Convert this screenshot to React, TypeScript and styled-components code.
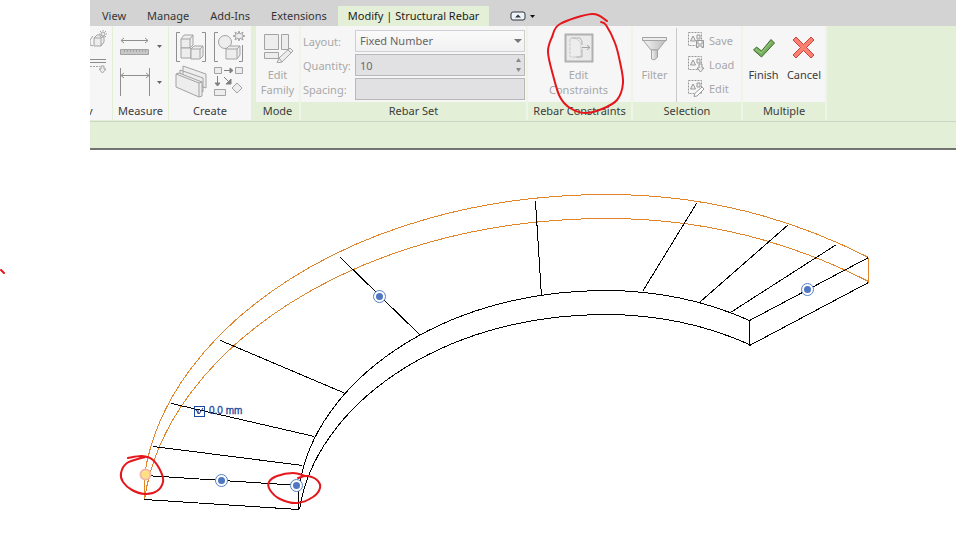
import React from "react";
import styled, { createGlobalStyle } from "styled-components";

const GlobalStyle = createGlobalStyle`
  body { margin: 0; background: #fff; overflow: hidden; }
  * { box-sizing: border-box; }
  button, select, input { font: inherit; margin: 0; }
`;

const Page = styled.main`
  position: relative;
  min-height: 100vh;
  font: 11px/15px "Noto Sans", "Open Sans", sans-serif;
  color: #3c3c3c;
`;
const Ribbon = styled.header`
  margin-left: 90px;
  background: #e4efd7;
  border-bottom: 2px solid #72756f;
`;
const TabBar = styled.nav`
  display: flex;
  gap: 1px;
  height: 26px;
  padding: 6px 0 0 2px;
  background: #d3d3d3;
`;
const Tab = styled.button<{ $active?: boolean }>`
  height: 20px;
  padding: 0 10px;
  border: 0;
  white-space: nowrap;
  line-height: 20px;
  color: ${(p) => (p.$active ? "#1c1c1c" : "#333")};
  background: ${(p) => (p.$active ? "#e4efd7" : "transparent")};
`;
const RibbonToggle = styled.button`
  display: flex;
  align-items: center;
  gap: 4px;
  margin-left: 20px;
  padding: 0;
  border: 0;
  background: transparent;
`;
const Panels = styled.div`
  display: flex;
  height: 96px;
  border-bottom: 1px solid #cdd4c6;
`;
const PanelBox = styled.section<{ $width: number; $plain?: boolean }>`
  display: flex;
  flex: none;
  flex-direction: column;
  width: ${(p) => p.$width}px;
  height: 94px;
  overflow: hidden;
  background: ${(p) => (p.$plain ? "#f6f6f6" : "#e4efd7")};
  border-right: ${(p) => (p.$plain ? "1px solid #e4efd7" : "2px solid #eef5e6")};
`;
const PanelBody = styled.div`
  display: flex;
  height: 76px;
  background: #f6f6f6;
`;
const PanelTitle = styled.h2<{ $clipped?: boolean }>`
  margin: 0;
  font: inherit;
  line-height: 18px;
  text-align: ${(p) => (p.$clipped ? "left" : "center")};
  text-indent: ${(p) => (p.$clipped ? "-3px" : "0")};
  white-space: nowrap;
`;
const Divider = styled.div`
  flex: none;
  width: 4px;
`;
const IconButton = styled.button`
  display: flex;
  flex: none;
  padding: 0;
  border: 0;
  background: transparent;
`;
const ToolGrid = styled.div`
  display: grid;
  grid-template-columns: auto auto;
  gap: 2px 6px;
  margin: 5px auto 0 6px;
  align-content: start;
`;
const MeasureGrid = styled(ToolGrid)`
  grid-template-columns: 32px 8px;
  gap: 4px 6px;
  align-items: center;
`;
const LargeButton = styled.button<{ $width: number; $enabled?: boolean }>`
  display: flex;
  flex: none;
  flex-direction: column;
  align-items: center;
  width: ${(p) => p.$width}px;
  padding: 5px 0 0;
  border: 0;
  background: transparent;
  line-height: 15px;
  white-space: nowrap;
  color: ${(p) => (p.$enabled ? "#3c3c3c" : "#a8a8a8")};

  svg { margin-bottom: 4px; }
`;
const SetForm = styled.form`
  display: grid;
  flex: 1;
  grid-template-columns: 50px 170px;
  grid-auto-rows: 22px;
  row-gap: 2px;
  column-gap: 2px;
  padding: 4px 0 0 2px;
  color: #a8a8a8;
`;
const FieldLabel = styled.label`
  line-height: 24px;
  white-space: nowrap;
`;
const FieldWrap = styled.div`
  position: relative;
  display: flex;
`;
const Arrow = styled.svg`
  position: absolute;
  right: 1px;
  top: 4px;
  pointer-events: none;
`;
const LayoutSelect = styled.select`
  appearance: none;
  width: 100%;
  padding: 0 4px 2px;
  border: 1px solid #cfcfd3;
  border-radius: 0;
  background: linear-gradient(#fafafa, #f1f1f2);
  color: #666;
  opacity: 1;
`;
const Field = styled.input`
  width: 100%;
  padding: 0 4px;
  border: 1px solid #b8b8bb;
  background: #e1e1e3;
  color: #6c6c6c;
`;
const SelectionList = styled.div`
  display: flex;
  flex: 1;
  flex-direction: column;
  margin-top: 2px;
  padding-left: 10px;
  border-left: 1px solid #c8c8c8;
`;
const SmallButton = styled.button`
  display: flex;
  align-items: center;
  gap: 4px;
  height: 24px;
  padding: 0;
  border: 0;
  background: transparent;
  color: #a8a8a8;
`;
const OptionsBar = styled.div`
  height: 26px;
`;
const Canvas = styled.section`
  position: relative;
  height: 408px;
  overflow: hidden;
`;
const Drawing = styled.svg`
  display: block;
`;
const Markup = styled.svg`
  position: absolute;
  left: 0;
  top: 0;
  pointer-events: none;
`;
const OffsetLabel = styled.label`
  position: absolute;
  left: 194px;
  top: 255px;
  display: flex;
  align-items: center;
  gap: 4px;
  font: 10px/12px "Liberation Sans", Arial, sans-serif;
  color: #1d48a0;
  -webkit-text-stroke: 0.3px #1d48a0;
`;
const OffsetCheck = styled.input`
  appearance: none;
  width: 11px;
  height: 11px;
  border: 1px solid #1d48a0;
`;
const CheckMark = styled.svg`
  position: absolute;
  left: 0;
  top: 0;
  pointer-events: none;
`;

type Pt = [number, number];

/* Smooth curve through all of the given points. */
function curve(pts: Pt[]): string {
  let d = `M${pts[0][0]} ${pts[0][1]}`;
  for (let i = 0; i < pts.length - 1; i++) {
    const a = pts[Math.max(i - 1, 0)];
    const b = pts[i];
    const c = pts[i + 1];
    const e = pts[Math.min(i + 2, pts.length - 1)];
    d += `C${b[0] + (c[0] - a[0]) / 6} ${b[1] + (c[1] - a[1]) / 6} ${c[0] - (e[0] - b[0]) / 6} ${c[1] - (e[1] - b[1]) / 6} ${c[0]} ${c[1]}`;
  }
  return d;
}

const OUTER = "M144 475C165 329 352 194 607 194C699 194 784 214 868 257";
const INNER = "M299 485C314 384 437 290 605 290C655 290 702 299 749 320";
const BARS: [number, number, number, number][] = [[535, 201, 541, 296], [696, 203, 642, 291], [788, 224, 700, 301], [836, 244, 730, 312], [868, 257, 749, 320], [340, 257, 420, 335], [220, 340, 345, 393], [171, 403, 314, 436], [153, 446, 302, 465], [145, 475, 299, 485], [144, 499, 298, 509], [749, 345, 868, 282]];
const HANDLES: Pt[] = [[379, 296], [807, 289], [221, 480], [296, 485]];
const CIRCLES: Pt[][] = [
  [[607, 21], [592, 14], [560, 24], [552, 37], [548, 52], [553, 75], [560, 97], [570, 108], [585, 113], [602, 109], [617, 100], [623, 83], [620, 62], [615, 43], [606, 25], [601, 22]],
  [[128, 458], [142, 456], [153, 460], [161, 472], [163, 482], [157, 491], [145, 494], [132, 490], [123, 482], [121, 473], [127, 463], [145, 457]],
  [[298, 478], [307, 476], [317, 480], [320, 488], [313, 497], [297, 503], [280, 499], [270, 490], [269, 482], [277, 476], [293, 473], [305, 476]],
];

const G = "#a3a3a3";
const svgProps = { fill: "#ededee", stroke: G, strokeWidth: 1, "aria-hidden": true };

const DropArrow = () => (
  <svg width="5" height="3" aria-hidden><path d="M0 0h5L2.500 3z" fill="#666" /></svg>
);
const ViewFragmentIcon = () => (
  <svg width="20" height="50" viewBox="0 -4 20 50" {...svgProps}>
    <path d="M4 8h7v8H4zM4 8l3-3h7l-3 3M11 8l3-3v7l-3 4M0 10v5l3 1M0 10l3-4" />
    <circle cx="13" cy="4" r="2" />
    <path d="M13 0v1M13 7v1M9 4h1M16 4h1M10 1l1 1M15 6l1 1M10 7l1-1M15 2l1-1" />
    <path d="M0 29.500h16M0 32.500h16" stroke="#8d8d8d" />
    <path d="M0 36.500h10" strokeDasharray="2 1" />
    <path d="M11 36h3v3h2l-3.500 4-3.500-4h2z" />
  </svg>
);
const RulerIcon = () => (
  <svg width="32" height="30" viewBox="0 0 32 30" {...svgProps}>
    <path d="M2 9.500h27M5 7l-3 2.500 3 2.500M26 7l3 2.500-3 2.500" fill="none" stroke="#8f8f8f" />
    <path d="M1.500 18.500h28v5h-28z" fill="#c7c7c7" />
    <path d="M5.500 19v2M8.500 19v2M11.500 19v2M14.500 19v2M17.500 19v2M20.500 19v2M23.500 19v2M26.500 19v2" />
  </svg>
);
const DimensionIcon = () => (
  <svg width="32" height="34" viewBox="0 0 32 34" {...svgProps}>
    <path d="M1.500 3v28M30.500 3v28M2 10.500h28M5 8l-3 2.500 3 2.500M27 8l3 2.500-3 2.500" fill="none" stroke="#8f8f8f" />
  </svg>
);
const BlocksIcon = () => (
  <svg width="32" height="32" viewBox="0 0 32 32" {...svgProps}>
    <path d="M5 1.500H1.500v29H5M27 1.500h3.500v29H27" fill="none" stroke="#8f8f8f" />
    <path d="M6 8l3-4h9v10l-3 3H6z" /><path d="M6 8h9v9M15 8l3-4" fill="none" />
    <path d="M6 17h10v10H6z" />
    <path d="M16 18l3-3h9v10l-3 3h-9z" /><path d="M16 18h9v9M25 18l3-3" fill="none" />
  </svg>
);
const ComponentIcon = () => (
  <svg width="32" height="32" viewBox="0 0 32 32" {...svgProps}>
    <path d="M5 1.500H1.500v29H5M26 30.500h3.500V14" fill="none" stroke="#8f8f8f" />
    <circle cx="12" cy="11" r="6.500" />
    <path d="M13 18l3-3h11v9l-3 4H13z" /><path d="M13 18h11v9M24 18l3-3" fill="none" />
    <path d="M26 0l1 3 3-2-1 3 3 1-3 1 1 3-3-2-1 3-1-3-3 2 1-3-3-1 3-1-1-3 3 2z" />
  </svg>
);
const WallsIcon = () => (
  <svg width="32" height="34" viewBox="0 0 32 34" {...svgProps}>
    <path d="M8 1l23 8v14L8 15zM5 5l23 8v14L5 19z" />
    <path d="M1 9l3-1 23 9v14l-3 1-23-10z" />
    <path d="M1 9l23 9 3-1M24 18v14" fill="none" />
  </svg>
);
const ShapesIcon = () => (
  <svg width="32" height="34" viewBox="0 0 32 34" {...svgProps}>
    <path d="M1.500 2.500h7v6h-7zM22.500 2.500h7v6h-7zM1.500 24.500h11v6h-11zM24 18l5 5-5 5-5-5z" />
    <path d="M11 5.500h8M4.500 11v8M11 12l6 6" stroke="#808080" />
    <path d="M17 3l3 2.500-3 2.500zM2 18l2.500 3L7 18zM18 14v5h-5z" fill="#808080" stroke="#808080" />
  </svg>
);
const FamilyIcon = () => (
  <svg width="32" height="32" viewBox="0 0 32 32" {...svgProps}>
    <path d="M2.500 3.500h14v15h-14zM19.500 3.500h7v15h-7zM2.500 21.500h14v6h-14z" />
    <path d="M28 17l3 3-11 11-5 1 2-5z" /><path d="M17 27l3 4M26 19l3 3" />
  </svg>
);
const ConstraintsIcon = () => (
  <svg width="32" height="32" viewBox="0 0 32 32" {...svgProps}>
    <path d="M2.500 3.500h27v27h-27z" fill="#eaeaea" stroke="#b0b0b0" strokeWidth="2" />
    <path d="M7 8c2-2 5-1 8 1l3 3v14H9c-2 0-2-1-2-3z" stroke="#c6c6c6" strokeDasharray="3 1" />
    <path d="M9 7h8l2 3v4M13 26h6V18" fill="none" stroke="#b4b4b4" />
    <path d="M19 16.500h8M24 14l3 2.500-3 2.500" fill="none" />
  </svg>
);
const FilterIcon = () => (
  <svg width="28" height="32" viewBox="0 0 28 32" {...svgProps}>
    <defs><linearGradient id="funnel"><stop stopColor="#f5f5f5" /><stop offset="1" stopColor="#bbb" /></linearGradient></defs>
    <path d="M2 9l8 10h7l8-10z" fill="url(#funnel)" /><path d="M1.500 6.500h24v3h-24z" />
    <path d="M10.500 19h6v7l-3 3-3-1z" fill="url(#funnel)" />
  </svg>
);
const SelectionIcon = ({ kind }: { kind: "save" | "load" | "edit" }) => (
  <svg width="18" height="18" viewBox="0 0 18 18" {...svgProps} stroke="#999">
    <path d="M1.500 1.500h13v13h-13z" strokeDasharray="2 1" fill="none" />
    <path d="M6 5l2.500 5h-5zM10 4h3v4h-3z" />
    {kind === "save" && <><path d="M9.500 9.500h7v7h-7z" /><path d="M11 10v3h4v-3M11 17v-2h4v2" fill="#fff" /></>}
    {kind === "load" && <path d="M12 9h3v4h2l-3.500 4-3.500-4h2z" />}
    {kind === "edit" && <path d="M15 8l2 2-7 7-3 .5.800-3z" fill="#fff" />}
  </svg>
);
const FinishIcon = () => (
  <svg width="32" height="32" viewBox="0 0 32 32" aria-hidden>
    <path d="M5.500 19l3-3 5 4L23 8.500l3.500 3.500-13 14z" fill="#79b060" stroke="#3b6a30" strokeLinejoin="round" />
    <path d="M8 18l5 4L23 11" fill="none" stroke="#9dce7c" />
  </svg>
);
const CancelIcon = () => (
  <svg width="32" height="32" viewBox="0 0 32 32" aria-hidden>
    <path d="M8 6l7.500 7.500L23 6l3 3-7.500 7.500L26 24l-3 3-7.500-7.500L8 27l-3-3 7.500-7.500L5 9z" fill="#fa8072" stroke="#c6453c" strokeLinejoin="round" />
  </svg>
);

function Panel({ title, width, plain, clipped, children }: { title: string; width: number; plain?: boolean; clipped?: boolean; children: React.ReactNode }) {
  return (
    <PanelBox $width={width} $plain={plain}>
      <PanelBody>{children}</PanelBody>
      <PanelTitle $clipped={clipped}>{title}</PanelTitle>
    </PanelBox>
  );
}

export default function App() {
  return (
    <Page>
      <GlobalStyle />
      <Ribbon>
        <TabBar>
          <Tab>View</Tab>
          <Tab>Manage</Tab>
          <Tab>Add-Ins</Tab>
          <Tab>Extensions</Tab>
          <Tab $active>Modify | Structural Rebar</Tab>
          <RibbonToggle aria-label="Minimize ribbon">
            <svg width="16" height="10" aria-hidden>
              <rect x="1" y="1" width="14" height="8" rx="2" fill="#eef3fa" stroke="#30343c" />
              <path d="M5 6.500L8 3.500l3 3z" fill="#30343c" />
            </svg>
            <svg width="5" height="3" aria-hidden><path d="M0 0h5L2.500 3z" fill="#111" /></svg>
          </RibbonToggle>
        </TabBar>
        <Panels>
          <Panel title="v" width={23} plain clipped>
            <IconButton aria-label="View tools"><ViewFragmentIcon /></IconButton>
          </Panel>
          <Panel title="Measure" width={56} plain>
            <MeasureGrid>
              <IconButton aria-label="Measure"><RulerIcon /></IconButton>
              <IconButton aria-label="Measure options"><DropArrow /></IconButton>
              <IconButton aria-label="Dimension"><DimensionIcon /></IconButton>
              <IconButton aria-label="Dimension options"><DropArrow /></IconButton>
            </MeasureGrid>
          </Panel>
          <Panel title="Create" width={83} plain>
            <ToolGrid>
              <IconButton aria-label="Create group"><BlocksIcon /></IconButton>
              <IconButton aria-label="Create component"><ComponentIcon /></IconButton>
              <IconButton aria-label="Create parts"><WallsIcon /></IconButton>
              <IconButton aria-label="Create assembly"><ShapesIcon /></IconButton>
            </ToolGrid>
          </Panel>
          <Divider />
          <Panel title="Mode" width={45}>
            <LargeButton $width={43} disabled><FamilyIcon /><span>Edit</span><span>Family</span></LargeButton>
          </Panel>
          <Panel title="Rebar Set" width={227}>
            <SetForm>
              <FieldLabel htmlFor="layout">Layout:</FieldLabel>
              <FieldWrap>
                <LayoutSelect id="layout" disabled><option>Fixed Number</option></LayoutSelect>
                <Arrow width="11" height="14"><path d="M1 5h8L5 9z" fill="#777" /></Arrow>
              </FieldWrap>
              <FieldLabel htmlFor="quantity">Quantity:</FieldLabel>
              <FieldWrap>
                <Field id="quantity" defaultValue="10" disabled />
                <Arrow width="11" height="14"><path d="M3 4h5L5.500 0zM3 10h5l-2.500 4z" fill="#888" /></Arrow>
              </FieldWrap>
              <FieldLabel htmlFor="spacing">Spacing:</FieldLabel>
              <FieldWrap><Field id="spacing" disabled /></FieldWrap>
            </SetForm>
          </Panel>
          <Panel title="Rebar Constraints" width={105}>
            <LargeButton $width={101} disabled><ConstraintsIcon /><span>Edit</span><span>Constraints</span></LargeButton>
          </Panel>
          <Panel title="Selection" width={110}>
            <LargeButton $width={43} disabled><FilterIcon />Filter</LargeButton>
            <SelectionList>
              <SmallButton disabled><SelectionIcon kind="save" />Save</SmallButton>
              <SmallButton disabled><SelectionIcon kind="load" />Load</SmallButton>
              <SmallButton disabled><SelectionIcon kind="edit" />Edit</SmallButton>
            </SelectionList>
          </Panel>
          <Panel title="Multiple" width={84}>
            <LargeButton $width={41} $enabled><FinishIcon />Finish</LargeButton>
            <LargeButton $width={40} $enabled><CancelIcon />Cancel</LargeButton>
          </Panel>
        </Panels>
        <OptionsBar />
      </Ribbon>
      <Canvas>
        <Drawing width="956" height="408" viewBox="0 150 956 408" fill="none" role="img" aria-label="Curved slab with rebar">
          <g shapeRendering="crispEdges" transform="translate(.5 .5)">
            <g stroke="#e28428">
              <path d={OUTER} />
              <path d={OUTER} transform="translate(0 24)" />
              <path d="M144 475V499M868 257V282" />
            </g>
            <g stroke="#000">
              <path d={INNER} />
              <path d={INNER} transform="translate(0 24)" />
              <path d="M298 485V509M749 320V345" />
              {BARS.map(([x1, y1, x2, y2]) => <line key={`${x1}-${y1}`} x1={x1} y1={y1} x2={x2} y2={y2} />)}
            </g>
          </g>
          {HANDLES.map(([x, y]) => (
            <g key={x} transform={`translate(${x + 0.5} ${y + 0.5})`}>
              <circle r="6" fill="#fff" stroke="#5482c4" />
              <circle r="3.500" fill="#4f77c2" />
            </g>
          ))}
          <circle cx="145.500" cy="474.500" r="5" fill="#ffe39a" stroke="#f3b8a4" strokeWidth="2" />
          <circle cx="145.500" cy="474.500" r="3" fill="#ffe07c" />
        </Drawing>
        <OffsetLabel>
          <OffsetCheck type="checkbox" defaultChecked />
          <CheckMark width="11" height="12"><path d="M2 5l3 4 4-6M4 5v4" fill="none" stroke="#17378a" /></CheckMark>
          0.0 mm
        </OffsetLabel>
      </Canvas>
      <Markup width="956" height="559" fill="none" stroke="#e5171c" strokeWidth="2" strokeLinecap="round">
        {CIRCLES.map((c, i) => <path key={i} d={curve(c)} />)}
        <path d="M1 270l3 3" />
      </Markup>
    </Page>
  );
}
